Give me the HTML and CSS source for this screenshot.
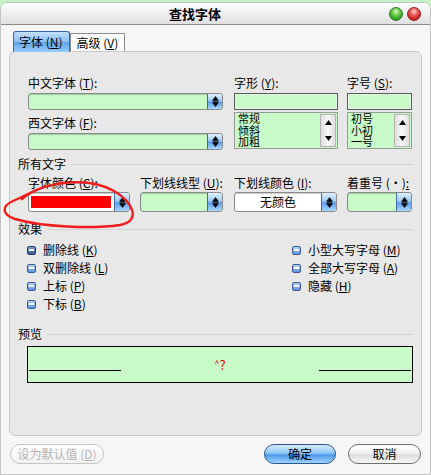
FILE: index.html
```html
<!DOCTYPE html>
<html lang="zh-CN">
<head>
  <meta charset="UTF-8">
  <title>查找字体</title>
  <link rel="stylesheet" href="styles.css">
</head>
<body>
  <div class="window">
    <div class="titlebar">
      <div class="title">查找字体</div>
      <div class="lights">
        <span class="light green"></span>
        <span class="light red"></span>
      </div>
    </div>

    <div class="tabs">
      <div class="tab active">字体 (<u>N</u>)</div>
      <div class="tab">高级 (<u>V</u>)</div>
    </div>

    <div class="panel">
      <div class="font-grid">
        <div class="col">
          <div class="lbl">中文字体 (<u>T</u>):</div>
          <div class="combo green wide">
            <span class="value"></span>
            <span class="spin"><svg width="7" height="11" viewBox="0 0 7 11"><path d="M3.5 0.5L6.5 4.5H0.5Z M0.5 6.5H6.5L3.5 10.5Z M1 5.5H6" stroke="#000" stroke-width="0.6"/></svg></span>
          </div>
          <div class="lbl lbl-next">西文字体 (<u>F</u>):</div>
          <div class="combo green wide">
            <span class="value"></span>
            <span class="spin"><svg width="7" height="11" viewBox="0 0 7 11"><path d="M3.5 0.5L6.5 4.5H0.5Z M0.5 6.5H6.5L3.5 10.5Z M1 5.5H6" stroke="#000" stroke-width="0.6"/></svg></span>
          </div>
        </div>
        <div class="col">
          <div class="lbl">字形 (<u>Y</u>):</div>
          <div class="field style-w"></div>
          <div class="list style-w">
            <ul>
              <li>常规</li>
              <li>倾斜</li>
              <li>加粗</li>
            </ul>
            <div class="scroll">
              <svg width="7" height="5" viewBox="0 0 7 5"><path d="M3.5 0L7 5H0Z"/></svg>
              <svg width="7" height="5" viewBox="0 0 7 5"><path d="M0 0H7L3.5 5Z"/></svg>
            </div>
          </div>
        </div>
        <div class="col">
          <div class="lbl">字号 (<u>S</u>):</div>
          <div class="field"></div>
          <div class="list">
            <ul>
              <li>初号</li>
              <li>小初</li>
              <li>一号</li>
            </ul>
            <div class="scroll">
              <svg width="7" height="5" viewBox="0 0 7 5"><path d="M3.5 0L7 5H0Z"/></svg>
              <svg width="7" height="5" viewBox="0 0 7 5"><path d="M0 0H7L3.5 5Z"/></svg>
            </div>
          </div>
        </div>
      </div>

      <div class="group"><span>所有文字</span><i></i></div>

      <div class="attr-grid">
        <div class="col">
          <div class="lbl">字体颜色 (<u>C</u>):</div>
          <div class="combo tall w1">
            <span class="value"><span class="swatch"></span></span>
            <span class="spin"><svg width="7" height="11" viewBox="0 0 7 11"><path d="M3.5 0.5L6.5 4.5H0.5Z M0.5 6.5H6.5L3.5 10.5Z M1 5.5H6" stroke="#000" stroke-width="0.6"/></svg></span>
          </div>
        </div>
        <div class="col">
          <div class="lbl">下划线线型 (<u>U</u>):</div>
          <div class="combo tall green w2">
            <span class="value"></span>
            <span class="spin"><svg width="7" height="11" viewBox="0 0 7 11"><path d="M3.5 0.5L6.5 4.5H0.5Z M0.5 6.5H6.5L3.5 10.5Z M1 5.5H6" stroke="#000" stroke-width="0.6"/></svg></span>
          </div>
        </div>
        <div class="col">
          <div class="lbl">下划线颜色 (<u>I</u>):</div>
          <div class="combo tall w3">
            <span class="value text">无颜色</span>
            <span class="spin"><svg width="7" height="11" viewBox="0 0 7 11"><path d="M3.5 0.5L6.5 4.5H0.5Z M0.5 6.5H6.5L3.5 10.5Z M1 5.5H6" stroke="#000" stroke-width="0.6"/></svg></span>
          </div>
        </div>
        <div class="col">
          <div class="lbl">着重号 (·)<u>:</u></div>
          <div class="combo tall green w4">
            <span class="value"></span>
            <span class="spin"><svg width="7" height="11" viewBox="0 0 7 11"><path d="M3.5 0.5L6.5 4.5H0.5Z M0.5 6.5H6.5L3.5 10.5Z M1 5.5H6" stroke="#000" stroke-width="0.6"/></svg></span>
          </div>
        </div>
      </div>

      <div class="group group-effects"><span>效果</span><i></i></div>

      <div class="effects">
        <div class="effect"><span class="check dark"></span><span>删除线 (<u>K</u>)</span></div>
        <div class="effect"><span class="check"></span><span>小型大写字母 (<u>M</u>)</span></div>
        <div class="effect"><span class="check"></span><span>双删除线 (<u>L</u>)</span></div>
        <div class="effect"><span class="check"></span><span>全部大写字母 (<u>A</u>)</span></div>
        <div class="effect"><span class="check"></span><span>上标 (<u>P</u>)</span></div>
        <div class="effect"><span class="check"></span><span>隐藏 (<u>H</u>)</span></div>
        <div class="effect"><span class="check"></span><span>下标 (<u>B</u>)</span></div>
      </div>

      <div class="group group-preview"><span>预览</span><i></i></div>

      <div class="preview">
        <i class="rule"></i>
        <span class="sample"><small>^</small>?</span>
        <i class="rule"></i>
      </div>
    </div>

    <div class="actions">
      <button class="btn disabled">设为默认值 (<u>D</u>)</button>
      <button class="btn primary">确定</button>
      <button class="btn">取消</button>
    </div>
  </div>

  <svg class="scribble" width="431" height="475" viewBox="0 0 431 475">
    <path d="M22 199 C45 180, 90 177, 114 191 C134 203, 141 221, 120 225 C92 229, 42 227, 15 219 C1 214, 2 206, 13 201 C20 198, 28 194, 36 190" fill="none" stroke="#f21c1c" stroke-width="2.4" stroke-linecap="round"/>
  </svg>
</body>
</html>
```

FILE: styles.css
```css
html {
  font-family: "Noto Sans CJK SC", sans-serif;
}

body {
  background: #c6f3c6;
  color: #000;
  font-size: 12px;
  line-height: 16px;
  margin: 0;
  position: relative;
}

u {
  text-decoration: underline;
}

.window {
  background: #f6f6f6;
  border: 1px solid #c4c4c4;
  border-radius: 7px 7px 0 0;
  box-sizing: border-box;
  display: flex;
  flex-direction: column;
  height: 473px;
  margin-top: 2px;
}

.titlebar {
  align-items: center;
  background: linear-gradient(#fdfdfd, #ececec 60%, #e0e0e0);
  border-bottom: 1px solid #8a8a8a;
  border-radius: 6px 6px 0 0;
  display: flex;
  height: 21px;
}

.title {
  flex: 1;
  font-size: 13px;
  font-weight: bold;
  text-align: center;
}

.lights {
  display: flex;
  gap: 4px;
  margin-right: 9px;
}

.light {
  border-radius: 50%;
  box-sizing: border-box;
  height: 14px;
  width: 14px;
}

.light.green {
  background: radial-gradient(circle at 50% 30%, #d8f8c8 0, #6ccc4c 35%, #2a9a22 75%, #3cb030 100%);
  border: 1px solid #2b7a22;
}

.light.red {
  background: radial-gradient(circle at 50% 30%, #ffd8d8 0, #ee5a5a 35%, #c41e1e 75%, #de3a3a 100%);
  border: 1px solid #8e1e1e;
}

.tabs {
  align-items: flex-end;
  display: flex;
  height: 20px;
  margin: 6px 0 0 12px;
}

.tab {
  background: #fff;
  border: 1px solid #8c8c8c;
  border-bottom: none;
  box-sizing: border-box;
  height: 18px;
  line-height: 17px;
  padding: 0 6px;
}

.tab.active {
  background: linear-gradient(#c4e0fc, #8cc0f4 48%, #62a4ec 52%, #94ccfa);
  border-color: #3a64a8;
  border-radius: 3px 3px 0 0;
  height: 21px;
  line-height: 20px;
  margin-bottom: -1px;
  padding: 0 6px 0 5px;
  position: relative;
}

.panel {
  background: #e8e8e8;
  border: 1px solid #c9c9c9;
  border-radius: 6px;
  box-sizing: border-box;
  height: 385px;
  margin: 0 8px;
  padding: 0 8px 0 18px;
}

.font-grid {
  display: grid;
  grid-template-columns: 206px 113px 65px;
  margin-top: 23px;
}

.lbl {
  height: 16px;
  white-space: nowrap;
}

.lbl-next {
  margin-top: 5px;
}

.combo {
  background: #fff;
  border: 1px solid #8a8a8a;
  border-radius: 3px;
  box-shadow: inset 0 1px 1px rgba(0, 0, 0, 0.2);
  box-sizing: border-box;
  display: flex;
  height: 17px;
  margin-top: 2px;
  overflow: hidden;
}

.combo.green {
  background: #c8fbc8;
}

.combo.wide {
  width: 195px;
}

.combo.tall {
  height: 20px;
  margin-top: 1px;
}

.w1 { width: 102px; }
.w2 { width: 83px; }
.w3 { width: 103px; }
.w4 { width: 65px; }

.combo .value {
  display: flex;
  flex: 1;
}

.combo .text {
  justify-content: center;
  line-height: 18px;
}

.swatch {
  background: #ff0000;
  flex: 1;
  margin: 3px 3px 3px 2px;
}

.spin {
  align-items: center;
  background: linear-gradient(#e0f0ff, #9ccaf6 45%, #5c9ce8 55%, #a8d8ff);
  border-left: 1px solid #44689e;
  display: flex;
  justify-content: center;
  width: 14px;
}

.field {
  background: #c8fbc8;
  border: 1px solid #5a5a5a;
  box-shadow: inset 0 0 0 1px #e6f6e6;
  box-sizing: border-box;
  height: 17px;
  margin-top: 2px;
  width: 65px;
}

.list {
  background: #c8fbc8;
  border: 1px solid #9a9a9a;
  box-sizing: border-box;
  display: flex;
  height: 37px;
  margin-top: 2px;
  width: 65px;
}

.style-w {
  width: 104px;
}

.list ul {
  flex: 1;
  font-size: 11px;
  line-height: 11.7px;
  list-style: none;
  margin: 0;
  padding: 0 0 0 3px;
}

.scroll {
  align-items: center;
  background: linear-gradient(90deg, #dedede, #f8f8f8 50%, #dedede);
  border: 1px solid #b4b4b4;
  display: flex;
  flex-direction: column;
  justify-content: space-between;
  margin: 1px 1px 1px 0;
  padding: 5px 0;
  width: 14px;
}

.group {
  align-items: center;
  display: flex;
  gap: 5px;
  height: 16px;
  margin: 6px 0 0 -10px;
}

.group i {
  background: #d2d2d2;
  flex: 1;
  height: 1px;
}

.group-effects {
  margin-top: 9px;
}

.group-preview {
  margin-top: 13px;
}

.attr-grid {
  display: grid;
  grid-template-columns: 112px 94px 113px 65px;
  margin-top: 3px;
}

.effects {
  display: grid;
  grid-template-columns: 265px 1fr;
  margin: 4px 0 0 -1px;
}

.effect {
  align-items: center;
  display: flex;
  gap: 7px;
  height: 18px;
  white-space: nowrap;
}

.check {
  align-items: center;
  background: linear-gradient(#b0d0f8, #5e92dc);
  border: 1px solid #3a5c92;
  border-radius: 2px;
  display: flex;
  height: 7px;
  justify-content: center;
  width: 7px;
}

.check.dark {
  background: linear-gradient(#7a9cc8, #3a5c92);
  border-color: #243c64;
}

.check::after {
  background: #fff;
  content: "";
  height: 2px;
  width: 5px;
}

.preview {
  align-items: center;
  background: #c8fbc8;
  border: 1px solid #000;
  box-sizing: border-box;
  display: flex;
  height: 37px;
  margin: 4px 0 0 -1px;
  padding: 0 1px;
}

.rule {
  background: #000;
  height: 1px;
  margin-top: 11px;
  width: 92px;
}

.sample {
  color: #e00000;
  flex: 1;
  font-size: 13px;
  text-align: center;
}

.sample small {
  font-size: 9px;
  vertical-align: 3px;
}

.actions {
  display: flex;
  gap: 12px;
  margin-top: 8px;
  padding: 0 9px;
}

.btn {
  background: linear-gradient(#fff, #f2f2f2 45%, #dedede 55%, #f8f8f8);
  border: 1px solid #6e6e6e;
  border-radius: 10px;
  color: #000;
  font: inherit;
  height: 20px;
  line-height: 18px;
  padding: 0;
  width: 73px;
}

.btn.disabled {
  background: linear-gradient(#fff, #f2f2f2);
  border-color: #c6c6c6;
  color: #b4b4b4;
  margin-right: auto;
  width: 94px;
}

.btn.primary {
  background: linear-gradient(#d6ecff, #90c6f6 45%, #4e98e8 55%, #9cd6ff);
  border-color: #2f5590;
  width: 72px;
}

.scribble {
  left: 0;
  pointer-events: none;
  position: absolute;
  top: 0;
}
```
